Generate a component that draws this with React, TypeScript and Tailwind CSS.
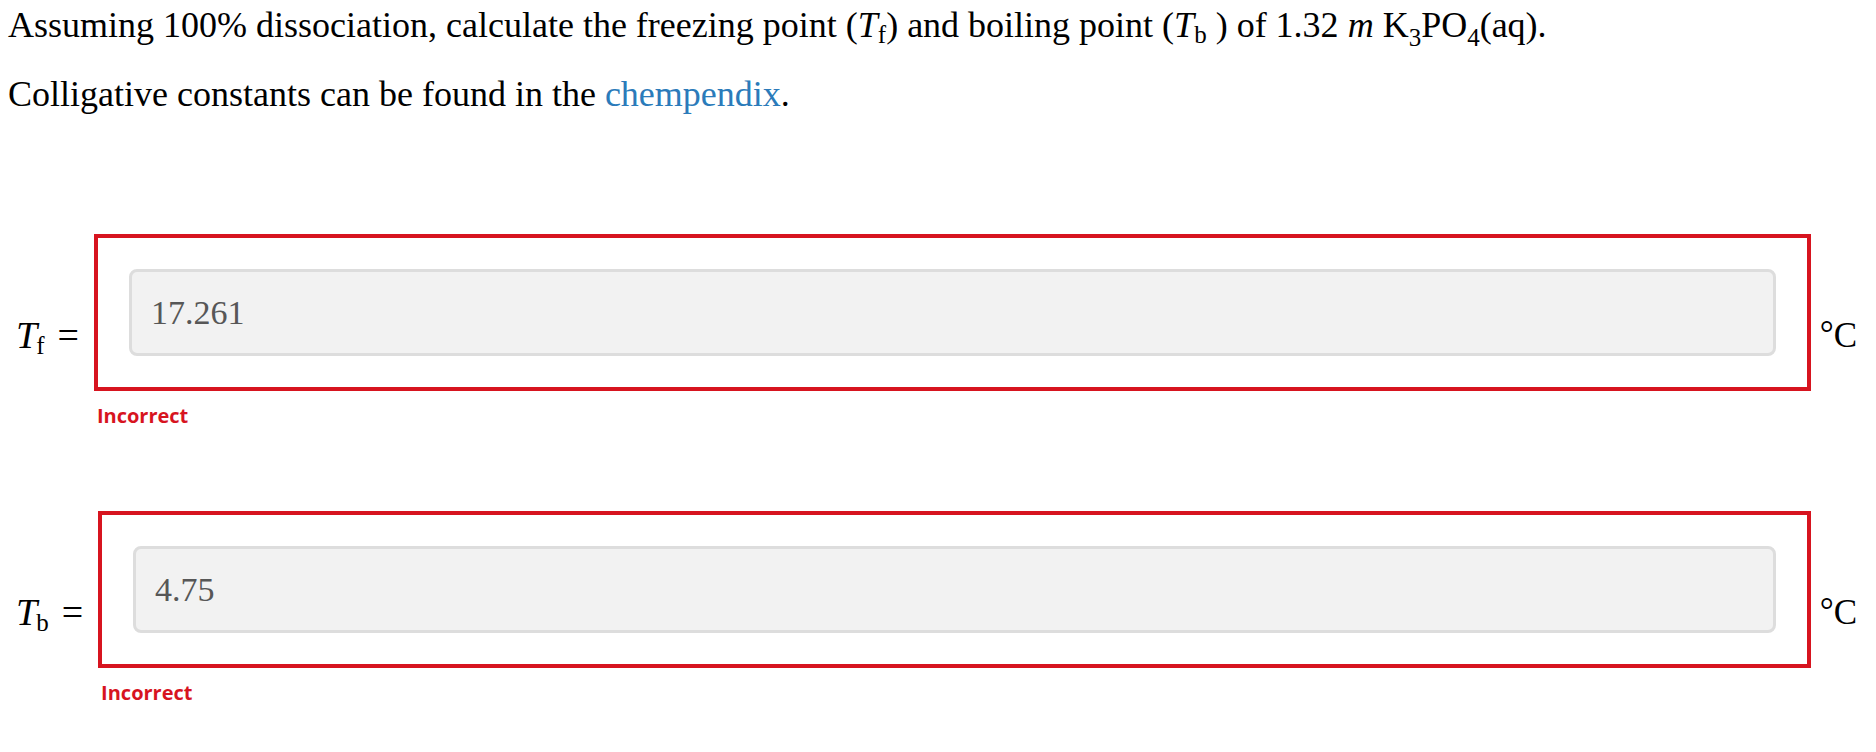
import React from "react";

const serif = { fontFamily: '"Liberation Serif", "Times New Roman", serif' };

function Row({ sym, value }: { sym: string; value: string }) {
  return (
    <div className="flex items-start pl-[16px] pr-[19px]">
      <div className="mt-[80px] flex items-baseline text-[38px] leading-[42px] text-black whitespace-nowrap" style={serif}>
        <span className="italic">T</span>
        <span className="text-[25px] leading-none relative top-[6px] -ml-[1px]">{sym}</span>
        <span className="ml-[13px]">=</span>
      </div>
      <div className="ml-[15px] flex-1 flex flex-col">
        <div className="border-[4px] border-[#d7141f] p-[31px]">
          <div
            className="h-[87px] rounded-[8px] border-[3px] border-[#dddddd] bg-[#f2f2f2] flex items-center pl-[19px] text-[34px] text-[#575757]"
            style={serif}
          >
            {value}
          </div>
        </div>
        <div
          className="mt-[10px] ml-[3px] text-[20px] leading-[30px] font-bold text-[#d7141f]"
          style={{ fontFamily: '"Open Sans", "Noto Sans", sans-serif' }}
        >
          Incorrect
        </div>
      </div>
      <div className="ml-[9px] mt-[82px] text-[35px] leading-[40px] text-black" style={serif}>
        <span className="relative top-[-2px]">°</span>C
      </div>
    </div>
  );
}

export default function App() {
  return (
    <div className="w-[1876px] h-[752px] bg-white overflow-hidden" style={serif}>
      <div className="pt-[5px] pl-[8px] text-[36px] leading-[40px] text-black whitespace-nowrap">
        Assuming 100% dissociation, calculate the freezing point (<span className="italic">T</span>
        <span className="text-[25px] leading-none relative top-[6px]">f</span>) and boiling point (<span className="italic">T</span>
        <span className="text-[25px] leading-none relative top-[6px]">b</span> ) of 1.32 <span className="italic">m</span> K
        <span className="text-[25px] leading-none relative top-[9px]">3</span>PO
        <span className="text-[25px] leading-none relative top-[9px]">4</span>(aq).
      </div>
      <div className="mt-[29px] pl-[8px] text-[36px] leading-[40px] text-black whitespace-nowrap">
        Colligative constants can be found in the <span className="text-[#2b7bba]">chempendix</span>.
      </div>
      <div className="mt-[120px]">
        <Row sym="f" value="17.261" />
      </div>
      <div className="mt-[80px]">
        <Row sym="b" value="4.75" />
      </div>
    </div>
  );
}
